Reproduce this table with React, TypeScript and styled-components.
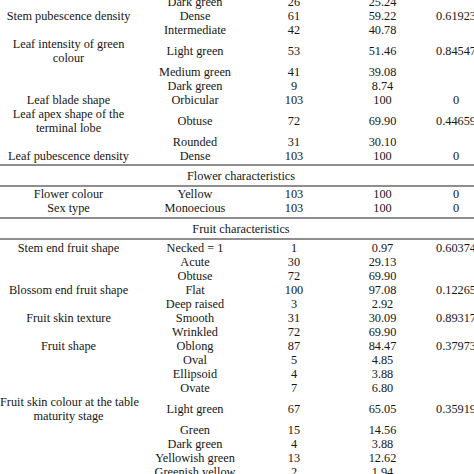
import { Fragment } from "react";
import styled, { createGlobalStyle } from "styled-components";

const GlobalStyle = createGlobalStyle`
  html, body {
    margin: 0;
    padding: 0;
    background: #ffffff;
  }
`;

const Page = styled.div`
  width: 474px;
  height: 474px;
  overflow: hidden;
  background: #ffffff;
  color: #161616;
  font-family: "Liberation Serif", "Times New Roman", serif;
  font-size: 12.3px;
  line-height: 14px;
`;

const Table = styled.div`
  width: 482px;
  margin-top: -5px;
`;

const Body = styled.div<{ $padTop: number; $padBottom: number }>`
  display: grid;
  grid-template-columns: 137px 116px 82px 95px 52px;
  align-items: center;
  padding-top: ${(p) => p.$padTop}px;
  padding-bottom: ${(p) => p.$padBottom}px;
`;

const Cell = styled.div`
  text-align: center;
  white-space: nowrap;
`;

const Rule = styled.div`
  height: 2px;
  background: #8e8e8e;
`;

const SectionTitle = styled.div`
  text-align: center;
  padding: 2.5px 0;
`;

type Row = [string, string, string, string, string];

const leafRows: Row[] = [
  ["", "Dark green", "26", "25.24", ""],
  ["Stem pubescence density", "Dense", "61", "59.22", "0.61923"],
  ["", "Intermediate", "42", "40.78", ""],
  ["Leaf intensity of green\ncolour", "Light green", "53", "51.46", "0.84547"],
  ["", "Medium green", "41", "39.08", ""],
  ["", "Dark green", "9", "8.74", ""],
  ["Leaf blade shape", "Orbicular", "103", "100", "0"],
  ["Leaf apex shape of the\nterminal lobe", "Obtuse", "72", "69.90", "0.44659"],
  ["", "Rounded", "31", "30.10", ""],
  ["Leaf pubescence density", "Dense", "103", "100", "0"],
];

const flowerRows: Row[] = [
  ["Flower colour", "Yellow", "103", "100", "0"],
  ["Sex type", "Monoecious", "103", "100", "0"],
];

const fruitRows: Row[] = [
  ["Stem end fruit shape", "Necked = 1", "1", "0.97", "0.60374"],
  ["", "Acute", "30", "29.13", ""],
  ["", "Obtuse", "72", "69.90", ""],
  ["Blossom end fruit shape", "Flat", "100", "97.08", "0.12265"],
  ["", "Deep raised", "3", "2.92", ""],
  ["Fruit skin texture", "Smooth", "31", "30.09", "0.89317"],
  ["", "Wrinkled", "72", "69.90", ""],
  ["Fruit shape", "Oblong", "87", "84.47", "0.37973"],
  ["", "Oval", "5", "4.85", ""],
  ["", "Ellipsoid", "4", "3.88", ""],
  ["", "Ovate", "7", "6.80", ""],
  ["Fruit skin colour at the table\nmaturity stage", "Light green", "67", "65.05", "0.35919"],
  ["", "Green", "15", "14.56", ""],
  ["", "Dark green", "4", "3.88", ""],
  ["", "Yellowish green", "13", "12.62", ""],
  ["", "Greenish yellow", "2", "1.94", ""],
];

const Label = ({ text }: { text: string }) => (
  <>
    {text.split("\n").map((line, i) => (
      <Fragment key={i}>
        {i > 0 && <br />}
        {line}
      </Fragment>
    ))}
  </>
);

const Rows = ({ rows, padTop, padBottom }: { rows: Row[]; padTop: number; padBottom: number }) => (
  <Body $padTop={padTop} $padBottom={padBottom}>
    {rows.map((row, r) =>
      row.map((value, c) => (
        <Cell key={`${r}-${c}`}>
          <Label text={value} />
        </Cell>
      ))
    )}
  </Body>
);

const App = () => (
  <>
    <GlobalStyle />
    <Page>
      <Table>
        <Rows rows={leafRows} padTop={0} padBottom={1} />
        <Rule />
        <SectionTitle>Flower characteristics</SectionTitle>
        <Rule />
        <Rows rows={flowerRows} padTop={0} padBottom={2} />
        <Rule />
        <SectionTitle>Fruit characteristics</SectionTitle>
        <Rule />
        <Rows rows={fruitRows} padTop={1} padBottom={0} />
      </Table>
    </Page>
  </>
);

export default App;
